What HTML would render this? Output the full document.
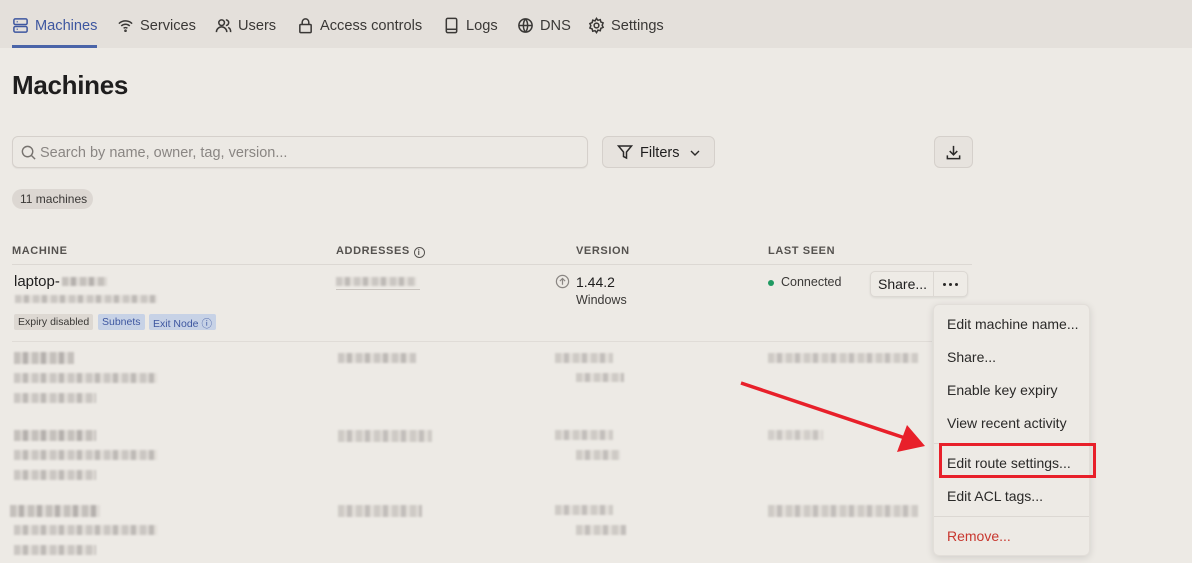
<!DOCTYPE html>
<html><head><meta charset="utf-8"><style>
*{box-sizing:border-box;margin:0;padding:0}
body{width:1192px;height:563px;overflow:hidden;background:#edeae5;font-family:"Liberation Sans",sans-serif;color:#1f1e1e;position:relative}
.nav{position:absolute;left:0;top:0;width:1192px;height:48px;background:#e4e0db}
.tab{position:absolute;top:17px;font-size:14.6px;color:#3a3836;display:flex;align-items:center;gap:6px}
.tab svg{width:17px;height:17px;fill:none;stroke:#3a3836;stroke-width:1.6}
.abs{position:absolute}
.blur{position:absolute;background:repeating-linear-gradient(90deg,#a9a4a0 0 6px,#cfcac5 6px 9px,#8f8a88 9px 14px,#d6d1cc 14px 18px);opacity:.6;filter:blur(1px)}
.menu div{position:absolute;left:13px;font-size:14px;color:#2a2928}
.th{position:absolute;top:245px;font-size:11px;font-weight:bold;letter-spacing:.6px;color:#55524f}
.tag{position:absolute;top:314px;height:16px;padding:2px 4px;font-size:10.5px;border-radius:2px}
</style></head><body>
<div class="nav">
 <div class="tab" style="left:12px;color:#3e57a0"><svg viewBox="0 0 18 18" style="stroke:#3e57a0"><rect x="2" y="2" width="14" height="6" rx="1.5"/><rect x="2" y="10" width="14" height="6" rx="1.5"/><path d="M5 5h1M5 13h1"/></svg>Machines</div>
 <div class="abs" style="left:12px;top:45px;width:85px;height:3px;background:#4a64a8"></div>
 <div class="tab" style="left:117px"><svg viewBox="0 0 18 18"><path d="M2 7a10 10 0 0 1 14 0M4.5 9.5a6.5 6.5 0 0 1 9 0M7 12a3 3 0 0 1 4 0"/><circle cx="9" cy="14.5" r=".6"/></svg>Services</div>
 <div class="tab" style="left:215px"><svg viewBox="0 0 18 18"><circle cx="7" cy="6" r="3"/><path d="M1.5 16a5.5 5.5 0 0 1 11 0M11.5 3a3 3 0 0 1 0 6M14 11a5 5 0 0 1 2.5 5"/></svg>Users</div>
 <div class="tab" style="left:297px"><svg viewBox="0 0 18 18"><rect x="3" y="8" width="12" height="8.5" rx="1"/><path d="M5.5 8V5.5a3.5 3.5 0 0 1 7 0V8"/></svg>Access controls</div>
 <div class="tab" style="left:443px"><svg viewBox="0 0 18 18"><rect x="3.5" y="1.5" width="11" height="15" rx="1.5"/><path d="M3.5 13h11"/></svg>Logs</div>
 <div class="tab" style="left:517px"><svg viewBox="0 0 18 18"><circle cx="9" cy="9" r="7"/><path d="M2 9h14M9 2c-3 3.5-3 10.5 0 14M9 2c3 3.5 3 10.5 0 14"/></svg>DNS</div>
 <div class="tab" style="left:588px"><svg viewBox="0 0 18 18"><circle cx="9" cy="9" r="2.5"/><path d="M9 1.5l1.5 2 2.5-.7.6 2.5 2.4 1-1 2.4 1 2.3-2.4 1-.6 2.5-2.5-.6L9 16.5l-1.5-2-2.5.6-.6-2.5-2.4-1 1-2.3-1-2.4 2.4-1 .6-2.5 2.5.7z"/></svg>Settings</div>
</div>
<div class="abs" style="left:12px;top:70px;font-size:26px;font-weight:bold;letter-spacing:-.3px">Machines</div>
<div class="abs" style="left:12px;top:136px;width:576px;height:32px;border:1px solid #d5d0cb;border-radius:6px;background:#ece9e4;box-shadow:0 1px 1px rgba(0,0,0,.05)">
 <svg class="abs" style="left:7px;top:7px" width="17" height="17" viewBox="0 0 18 18" fill="none" stroke="#77736f" stroke-width="1.5"><circle cx="8" cy="8" r="5.5"/><path d="M12 12l4 4"/></svg>
 <div class="abs" style="left:27px;top:8px;font-size:14.5px;color:#8a8683">Search by name, owner, tag, version...</div>
</div>
<div class="abs" style="left:602px;top:136px;width:113px;height:32px;border:1px solid #d5d0cb;border-radius:6px;background:#e7e3de;font-size:14.5px;padding:8px 0 0 37px">Filters
 <svg class="abs" style="left:14px;top:7px" width="16" height="16" viewBox="0 0 16 16" fill="none" stroke="#2a2928" stroke-width="1.5"><path d="M1.5 2h13l-5 6v6l-3-1.5V8z"/></svg>
 <svg class="abs" style="left:87px;top:12px" width="10" height="8" viewBox="0 0 10 8" fill="none" stroke="#2a2928" stroke-width="1.4"><path d="M1 2l4 4 4-4"/></svg></div>
<div class="abs" style="left:934px;top:136px;width:39px;height:32px;border:1px solid #d5d0cb;border-radius:6px;background:#e7e3de">
 <svg class="abs" style="left:10px;top:7px" width="17" height="17" viewBox="0 0 18 18" fill="none" stroke="#2a2928" stroke-width="1.6"><path d="M9 2v9M5 7.5L9 11.5 13 7.5M2.5 12v3.5h13V12"/></svg></div>
<div class="abs" style="left:12px;top:189px;width:81px;height:20px;border-radius:10px;background:#dcd7d2;font-size:12px;padding:3px 0 0 8px;color:#3a3836">11 machines</div>
<div class="th" style="left:12px">MACHINE</div>
<div class="th" style="left:336px">ADDRESSES <span style="display:inline-block;width:11px;height:11px;border:1.2px solid #55524f;border-radius:50%;font-size:8px;text-align:center;line-height:9px;vertical-align:-1px">i</span></div>
<div class="th" style="left:576px">VERSION</div>
<div class="th" style="left:768px">LAST SEEN</div>
<div class="abs" style="left:12px;top:264px;width:960px;height:1px;background:#dcd8d3"></div>
<div class="abs" style="left:14px;top:273px;font-size:15px">laptop-</div>
<div class="blur" style="left:62px;top:277px;width:45px;height:9px"></div>
<div class="blur" style="left:15px;top:295px;width:142px;height:8px;opacity:.5"></div>
<div class="tag" style="left:14px;background:#ddd8d2;color:#3a3836">Expiry disabled</div>
<div class="tag" style="left:98px;background:#c7d2e6;color:#3e57a0">Subnets</div>
<div class="tag" style="left:149px;background:#c7d2e6;color:#3e57a0">Exit Node ⓘ</div>
<div class="blur" style="left:336px;top:277px;width:80px;height:9px;opacity:.5"></div>
<div class="abs" style="left:336px;top:289px;width:84px;height:1px;background:#c9c4bf"></div>
<svg class="abs" style="left:555px;top:274px" width="15" height="15" viewBox="0 0 16 16" fill="none" stroke="#8a8683" stroke-width="1.3"><circle cx="8" cy="8" r="6.5"/><path d="M8 11.5V5M5.2 7.6L8 4.8l2.8 2.8"/></svg>
<div class="abs" style="left:576px;top:274px;font-size:14px">1.44.2</div>
<div class="abs" style="left:576px;top:293px;font-size:12.5px;color:#3a3836">Windows</div>
<div class="abs" style="left:768px;top:280px;width:6px;height:6px;border-radius:50%;background:#1f9a62"></div>
<div class="abs" style="left:781px;top:275px;font-size:12.5px;color:#3a3836">Connected</div>
<div class="abs" style="left:870px;top:271px;width:98px;height:26px;border:1px solid #dcd8d3;border-radius:5px;background:#eeebe6;box-shadow:0 1px 2px rgba(0,0,0,.08)">
 <div class="abs" style="left:7px;top:4px;font-size:14px">Share...</div>
 <div class="abs" style="left:62px;top:0;width:1px;height:24px;background:#dcd8d3"></div>
 <div class="abs" style="left:72px;top:11px;width:3px;height:3px;border-radius:50%;background:#2a2928;box-shadow:6px 0 0 #2a2928,12px 0 0 #2a2928"></div></div>
<div class="abs" style="left:12px;top:341px;width:920px;height:1px;background:#e0dcd7"></div>
<div class="blur" style="left:14px;top:352px;width:60px;height:12px"></div>
<div class="blur" style="left:14px;top:373px;width:143px;height:10px;opacity:.5"></div>
<div class="blur" style="left:14px;top:393px;width:82px;height:10px;opacity:.5"></div>
<div class="blur" style="left:338px;top:353px;width:78px;height:10px;opacity:.5"></div>
<div class="blur" style="left:555px;top:353px;width:58px;height:10px;opacity:.45"></div>
<div class="blur" style="left:576px;top:373px;width:48px;height:9px;opacity:.45"></div>
<div class="blur" style="left:768px;top:353px;width:150px;height:10px;opacity:.45"></div>
<div class="blur" style="left:14px;top:430px;width:82px;height:11px;opacity:.6"></div>
<div class="blur" style="left:14px;top:450px;width:143px;height:10px;opacity:.5"></div>
<div class="blur" style="left:14px;top:470px;width:82px;height:10px;opacity:.5"></div>
<div class="blur" style="left:338px;top:430px;width:94px;height:12px;opacity:.45"></div>
<div class="blur" style="left:555px;top:430px;width:58px;height:10px;opacity:.45"></div>
<div class="blur" style="left:576px;top:450px;width:44px;height:10px;opacity:.45"></div>
<div class="blur" style="left:768px;top:430px;width:55px;height:10px;opacity:.4"></div>
<div class="blur" style="left:10px;top:505px;width:90px;height:12px;opacity:.6"></div>
<div class="blur" style="left:14px;top:525px;width:143px;height:10px;opacity:.5"></div>
<div class="blur" style="left:14px;top:545px;width:82px;height:10px;opacity:.5"></div>
<div class="blur" style="left:338px;top:505px;width:84px;height:12px;opacity:.45"></div>
<div class="blur" style="left:555px;top:505px;width:58px;height:10px;opacity:.45"></div>
<div class="blur" style="left:576px;top:525px;width:50px;height:10px;opacity:.45"></div>
<div class="blur" style="left:768px;top:505px;width:150px;height:12px;opacity:.45"></div>
<div class="abs menu" style="left:933px;top:304px;width:157px;height:252px;background:#edeae5;border:1px solid #e2ded9;border-radius:6px;box-shadow:0 2px 8px rgba(0,0,0,.12)">
 <div style="top:11px">Edit machine name...</div>
 <div style="top:44px">Share...</div>
 <div style="top:77px">Enable key expiry</div>
 <div style="top:110px">View recent activity</div>
 <div style="left:0;top:138px;width:155px;height:1px;background:#dcd8d3"></div>
 <div style="top:150px">Edit route settings...</div>
 <div style="top:183px">Edit ACL tags...</div>
 <div style="left:0;top:211px;width:155px;height:1px;background:#dcd8d3"></div>
 <div style="top:223px;color:#c8372f">Remove...</div>
</div>
<div class="abs" style="left:939px;top:443px;width:157px;height:35px;border:3px solid #e8202a"></div>
<svg class="abs" style="left:0;top:0" width="1192" height="563"><line x1="741" y1="383" x2="905" y2="438" stroke="#e8202a" stroke-width="3.5"/><polygon points="925,446 897,452 907,425" fill="#e8202a"/></svg>
</body></html>
